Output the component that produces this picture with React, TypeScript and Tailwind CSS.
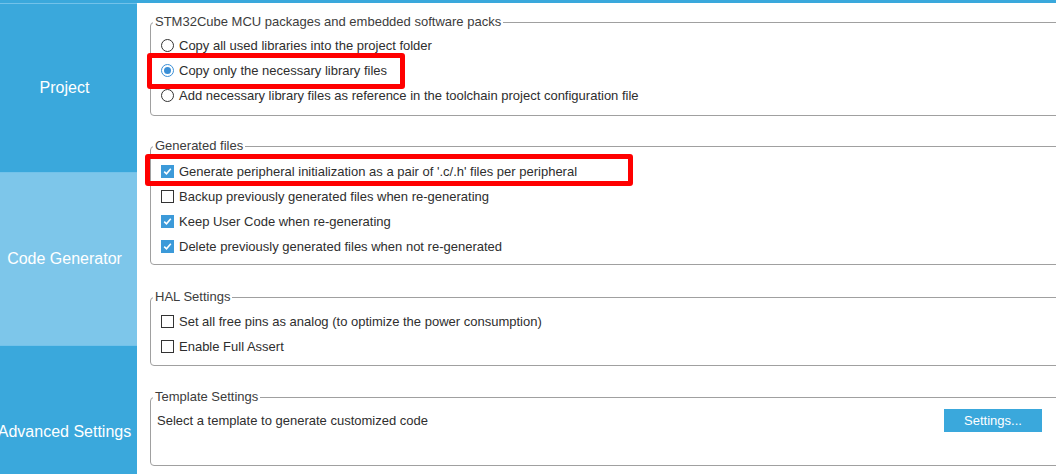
import React from 'react';

const font = { fontFamily: '"Liberation Sans", Arial, sans-serif' };

type Opt = { label: string; checked?: boolean; mark?: string };

const Radio = ({ checked }: { checked?: boolean }) =>
  checked ? (
    <span className="w-[13px] h-[13px] rounded-full border border-[#3b8fd6] bg-white flex items-center justify-center shrink-0">
      <span className="w-[7px] h-[7px] rounded-full bg-[#3b8fd6]" />
    </span>
  ) : (
    <span className="w-[13px] h-[13px] rounded-full border border-[#333333] bg-white shrink-0" />
  );

const Checkbox = ({ checked }: { checked?: boolean }) =>
  checked ? (
    <span className="w-[13px] h-[13px] bg-[#3c9ad9] flex items-center justify-center shrink-0">
      <svg width="9" height="9" viewBox="0 0 9 9" fill="none">
        <path d="M1.2 4.6 L3.5 6.8 L7.8 1.8" stroke="white" strokeWidth="1.6" />
      </svg>
    </span>
  ) : (
    <span className="w-[13px] h-[13px] border border-[#333333] bg-white shrink-0" />
  );

// red annotation frame drawn over a row
const Frame = ({ className }: { className: string }) => (
  <span className={`absolute border-[5px] border-[#ff0000] rounded-[3px] pointer-events-none ${className}`} />
);

const Group = ({
  title,
  className,
  children,
}: {
  title: string;
  className: string;
  children: React.ReactNode;
}) => (
  <fieldset className={`ml-[13px] mr-[-10px] border border-[#a0a0a0] rounded-[4px] px-[10px] ${className}`}>
    <legend className="ml-[-8px] px-[2px] text-[13px] leading-[14px] text-[#3c3c3c]">{title}</legend>
    {children}
  </fieldset>
);

const Row = ({ kind, opt }: { kind: 'radio' | 'check'; opt: Opt }) => (
  <div className="relative flex items-center h-[25px] gap-[5px] text-[13px] text-[#2e2e2e] whitespace-nowrap">
    {kind === 'radio' ? <Radio checked={opt.checked} /> : <Checkbox checked={opt.checked} />}
    <span>{opt.label}</span>
    {opt.mark === 'lib' && <Frame className="-left-[14px] -top-[5px] w-[258px] h-[36px]" />}
    {opt.mark === 'gen' && <Frame className="-left-[16px] -top-[5px] w-[488px] h-[32px]" />}
  </div>
);

const packs: Opt[] = [
  { label: 'Copy all used libraries into the project folder' },
  { label: 'Copy only the necessary library files', checked: true, mark: 'lib' },
  { label: 'Add necessary library files as reference in the toolchain project configuration file' },
];

const generated: Opt[] = [
  { label: "Generate peripheral initialization as a pair of '.c/.h' files per peripheral", checked: true, mark: 'gen' },
  { label: 'Backup previously generated files when re-generating' },
  { label: 'Keep User Code when re-generating', checked: true },
  { label: 'Delete previously generated files when not re-generated', checked: true },
];

const hal: Opt[] = [
  { label: 'Set all free pins as analog (to optimize the power consumption)' },
  { label: 'Enable Full Assert' },
];

const tabs = [
  { id: 'project', label: 'Project', h: 'h-[169px]', bg: 'bg-[#3aa8dc]' },
  { id: 'codegen', label: 'Code Generator', h: 'h-[173px]', bg: 'bg-[#7dc6ea]' },
  { id: 'advanced', label: 'Advanced Settings', h: 'h-[172px]', bg: 'bg-[#3aa8dc]' },
];

export default function App() {
  return (
    <div className="w-[1056px] h-[474px] overflow-hidden bg-white flex flex-col" style={font}>
      <div className="h-[3px] bg-[#3aa8dc] shrink-0" />
      <div className="flex flex-1 min-h-0">
        {/* Sidebar */}
        <div className="w-[137px] shrink-0 flex flex-col bg-[#3aa8dc] overflow-hidden">
          {tabs.map((t) => (
            <div
              key={t.id}
              className={`${t.h} ${t.bg} shrink-0 border-t border-[#72c2ea] flex items-center justify-center pr-[8px] text-white text-[16px] whitespace-nowrap`}
            >
              {t.label}
            </div>
          ))}
        </div>

        {/* Settings */}
        <div className="flex-1 overflow-hidden flex flex-col">
          <Group title="STM32Cube MCU packages and embedded software packs" className="mt-[12px] pt-[4px] pb-[7px]">
            {packs.map((o) => (
              <Row key={o.label} kind="radio" opt={o} />
            ))}
          </Group>

          <Group title="Generated files" className="mt-[23px] pt-[6px] pb-[5px]">
            {generated.map((o) => (
              <Row key={o.label} kind="check" opt={o} />
            ))}
          </Group>

          <Group title="HAL Settings" className="mt-[25px] pt-[5px] pb-[6px]">
            {hal.map((o) => (
              <Row key={o.label} kind="check" opt={o} />
            ))}
          </Group>

          <Group title="Template Settings" className="mt-[24px] pt-[5px] pb-[33px]">
            <div className="ml-[-4px] flex items-center justify-between h-[23px] text-[13px] text-[#2e2e2e]">
              <span>Select a template to generate customized code</span>
              <button className="w-[98px] h-[23px] mr-[13px] bg-[#3aa8dc] text-white text-[13px]">Settings...</button>
            </div>
          </Group>
        </div>
      </div>
    </div>
  );
}
